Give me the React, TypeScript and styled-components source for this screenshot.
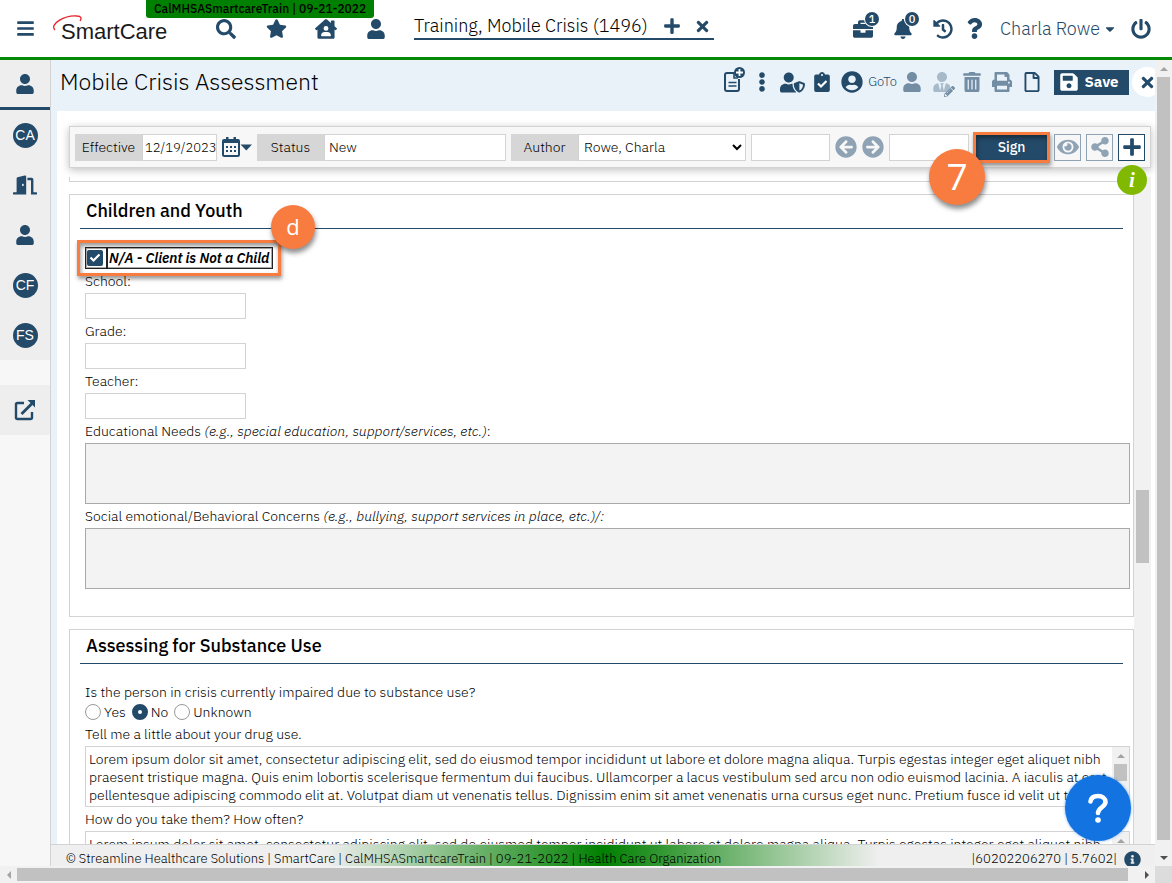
import React from 'react';
import styled, { createGlobalStyle, css } from 'styled-components';
import {
  FaArrowCircleLeft, FaArrowCircleRight, FaBars, FaBell, FaBriefcase, FaCaretDown, FaDoorOpen,
  FaEllipsisV, FaEye, FaHistory, FaHouseUser, FaInfoCircle, FaPlus, FaPowerOff, FaPrint,
  FaQuestion, FaRegFile, FaSave, FaSearch, FaShareAlt, FaStar, FaTimes,
  FaTrashAlt, FaUser, FaUserCircle, FaUserShield, FaUserTie, FaPencilAlt,
} from 'react-icons/fa';

const navy = '#244a69';
const faded = '#728da4';
const line = '#d3d3d3';
const orange = '#f87c40';

const GlobalStyle = createGlobalStyle`
  *, *::before, *::after { box-sizing: border-box; }
  body {
    margin: 0;
    color: #000;
    background: #fff;
    font: 350 14px/18px "IBM Plex Sans", Roboto, "Liberation Sans", sans-serif;
  }
  button, input, select, textarea { font: inherit; color: inherit; margin: 0; }
  button { padding: 0; border: 0; background: none; cursor: pointer; }
  svg { display: block; flex: none; }
`;

const Shell = styled.div`
  display: flex;
  flex-direction: column;
  height: 100vh;
  overflow: hidden;
`;

/* ---------- header ---------- */

const Header = styled.header`
  position: relative;
  display: flex;
  align-items: center;
  flex: none;
  height: 60px;
  padding: 0 21px 0 16px;
  border-bottom: 3px solid #068a06;
  color: ${navy};
`;

const Banner = styled.div`
  position: absolute;
  top: 0;
  left: 146px;
  height: 18px;
  padding: 0 8px;
  border-radius: 0 0 3px 3px;
  background: #008000;
  color: #000;
  font-size: 12px;
  font-weight: 500;
  white-space: nowrap;
`;

const PlainButton = styled.button`
  display: flex;
  align-items: center;
  justify-content: center;
  color: ${navy};
`;

const Logo = styled.a`
  position: relative;
  width: 140px;
  margin-left: 26px;
  color: #1a1a1a;
  font: 22px/26px "Liberation Sans", Arial, sans-serif;
  text-decoration: none;
  padding-top: 7px;

  svg { position: absolute; left: -10px; top: 3px; }
`;

const NavButton = styled(PlainButton)`
  width: 50px;
  height: 40px;
`;

const ClientTab = styled.div`
  display: flex;
  align-items: center;
  width: 300px;
  height: 26px;
  margin: 0 auto 3px 13px;
  border-bottom: 2px solid ${navy};
  font-size: 18px;

  span { flex: 1; color: #000; font-weight: 300; white-space: nowrap; }
  button { width: 30px; }
  button:last-child { margin-right: -3px; }
`;

const Tools = styled.div`
  display: flex;
  align-items: center;
`;

const ToolCell = styled(PlainButton)<{ $w: number }>`
  position: relative;
  width: ${(p) => p.$w}px;
  height: 40px;
`;

const Count = styled.span`
  position: absolute;
  top: 3px;
  left: 22px;
  width: 14px;
  height: 14px;
  border-radius: 50%;
  background: ${navy};
  box-shadow: 0 0 0 1px #fff;
  color: #fff;
  font-size: 11px;
  font-weight: 500;
  line-height: 14px;
  text-align: center;
`;

const UserMenu = styled(PlainButton)`
  gap: 3px;
  margin: 0 14px 0 15px;
  font-size: 18px;
  font-weight: 300;
  white-space: nowrap;
`;

/* ---------- body ---------- */

const Middle = styled.div`
  display: flex;
  flex: 1;
  min-height: 0;
`;

const Sidebar = styled.nav`
  flex: none;
  width: 51px;
  border-right: 1px solid ${line};
  background: #f7f7f7;
`;

const SideItem = styled(PlainButton)<{ $current?: boolean; $apart?: boolean }>`
  width: 50px;
  height: 50px;
  background: #eee;
  ${(p) => p.$current && css`border-bottom: 3px solid ${navy};`}
  ${(p) => p.$apart && css`margin-top: 25px;`}
`;

const Initials = styled.span`
  width: 25px;
  height: 25px;
  border-radius: 50%;
  background: ${navy};
  color: #fff;
  font: 14px/25px "Liberation Sans", Arial, sans-serif;
  text-align: center;
`;

const Main = styled.main`
  display: flex;
  flex-direction: column;
  flex: 1;
  min-width: 0;
  background: #eaf2f9;
`;

const TitleBar = styled.div`
  display: flex;
  align-items: center;
  flex: none;
  height: 51px;
  padding: 0 0 7px 9px;
  overflow: hidden;
  color: ${navy};
`;

const Title = styled.h1`
  flex: 1;
  margin: 0;
  padding-bottom: 2px;
  color: #000;
  font-size: 23px;
  font-weight: 350;
  line-height: 30px;
`;

const ActionButton = styled(PlainButton)<{ $dim?: boolean }>`
  position: relative;
  width: 30px;
  height: 30px;
  ${(p) => p.$dim && css`color: ${faded};`}
`;

const GoToButton = styled(PlainButton)`
  justify-content: flex-end;
  gap: 5px;
  width: 60px;
  font-size: 13px;
`;

const PencilMark = styled.span`
  position: absolute;
  right: 2px;
  bottom: 0;
`;

const SaveButton = styled(PlainButton)`
  gap: 5px;
  width: 75px;
  height: 25px;
  margin-left: 7px;
  padding-right: 5px;
  background: ${navy};
  color: #fff;
  font-size: 15px;
  font-weight: 700;
`;

const CloseButton = styled(PlainButton)`
  flex: none;
  width: 30px;
  height: 30px;
  margin: 0 -7px 0 3px;
  border-radius: 50%;
  background: #fff;
`;

const Sheet = styled.div`
  position: relative;
  display: flex;
  flex-direction: column;
  flex: 1;
  min-height: 0;
  margin-left: 6px;
  padding: 15px 4px 0 12px;
  background: #fff;
`;

const Toolbar = styled.div`
  display: flex;
  align-items: center;
  flex: none;
  gap: 5px;
  height: 42px;
  padding: 0 5px;
  border: 1px solid ${line};
  background: #f7f7f7;
  box-shadow: 0 2px 8px rgba(0, 0, 0, 0.25);
`;

const Field = styled.div<{ $grow?: boolean }>`
  display: flex;
  height: 27px;
  flex: ${(p) => (p.$grow ? '1' : 'none')};
  min-width: 0;

  label {
    flex: none;
    width: 67px;
    background: #d6d6d6;
    line-height: 27px;
    text-align: center;
  }
`;

const BarInput = styled.input<{ $w?: number }>`
  width: ${(p) => (p.$w ? `${p.$w}px` : '100%')};
  height: 27px;
  padding: 0 0 0 4px;
  border: 1px solid ${line};
  border-radius: 0;
  background: #fff;
`;

const DateInput = styled(BarInput)`
  padding-left: 2px;
  font-size: 13px;
`;

const AuthorSelect = styled.select`
  width: 168px;
  height: 27px;
  padding: 0 1px;
  border: 1px solid ${line};
  border-radius: 0;
  background: #fff;
`;

const DateButton = styled(PlainButton)`
  width: 30px;
`;

const RoundButton = styled(PlainButton)`
  width: 22px;
  color: #8fa3b5;
`;

const SignHolder = styled.div`
  position: relative;
  width: 75px;
  height: 27px;
`;

const SignButton = styled.button`
  width: 100%;
  height: 100%;
  background: ${navy};
  color: #fff;
  font-weight: 500;
`;

const Frame = styled.span<{ $x: number; $y: number }>`
  position: absolute;
  inset: ${(p) => -p.$y}px ${(p) => -p.$x}px;
  border: 3px solid ${orange};
  box-shadow: 1px 3px 4px rgba(0, 0, 0, 0.4), inset 1px 3px 4px rgba(0, 0, 0, 0.4);
  pointer-events: none;
`;

const Step = styled.span<{ $size: number; $left: number; $top: number; $font: number }>`
  position: absolute;
  z-index: 2;
  left: ${(p) => p.$left}px;
  top: ${(p) => p.$top}px;
  width: ${(p) => p.$size}px;
  height: ${(p) => p.$size}px;
  border-radius: 50%;
  background: ${orange};
  box-shadow: 1px 4px 5px rgba(0, 0, 0, 0.45);
  color: #fff;
  font: 500 ${(p) => p.$font}px/${(p) => p.$size - 2}px "Open Sans", "Noto Sans", sans-serif;
  text-align: center;
`;

const SquareButton = styled(PlainButton)<{ $on?: boolean }>`
  width: 27px;
  height: 27px;
  border: 1px solid ${(p) => (p.$on ? navy : '#8fa3b5')};
  color: ${(p) => (p.$on ? navy : '#8fa3b5')};
  background: ${(p) => (p.$on ? '#fff' : 'transparent')};
`;

const InfoDot = styled.button`
  position: absolute;
  z-index: 2;
  top: 54px;
  right: 8px;
  width: 30px;
  height: 30px;
  border-radius: 50%;
  background: #80b900;
  color: #fff;
  font: italic bold 21px/30px "Liberation Serif", serif;
`;

const Scroller = styled.div`
  display: flex;
  flex: 1;
  min-height: 0;
  margin-top: 9px;
`;

const FormColumn = styled.div`
  flex: 1;
  min-width: 0;
  overflow: hidden;
`;

const PreviousEnd = styled.div`
  height: 5px;
  margin-bottom: 12px;
  border: 1px solid ${line};
  border-top: 0;
`;

const Card = styled.section`
  margin-bottom: 12px;
  padding: 0 3px 27px 15px;
  border: 1px solid ${line};
`;

const CardTitle = styled.h2`
  height: 34px;
  margin: 0 7px 18px -5px;
  padding-left: 6px;
  border-bottom: 1px solid ${navy};
  font-size: 18px;
  font-weight: 500;
  line-height: 32px;
`;

const CheckRow = styled.div`
  position: relative;
  display: flex;
  width: 188px;
  height: 22px;
  border: 1px solid #222;
  box-shadow: inset 0 0 0 1px #aaa;

  label {
    flex: 1;
    border: 1px solid #222;
    border-width: 0 0 0 2px;
    padding-left: 1px;
    font-weight: 600;
    font-style: italic;
    line-height: 20px;
    white-space: nowrap;
  }
`;

const CheckBox = styled.span`
  position: relative;
  flex: none;
  width: 16px;
  height: 16px;
  margin: 2px 3px 0 1px;

  input {
    display: block;
    appearance: none;
    width: 16px;
    height: 16px;
    margin: 0;
    border-radius: 2px;
    background: ${navy};
  }
  svg { position: absolute; left: 2px; top: 3px; pointer-events: none; }
`;

const FieldLabel = styled.label`
  display: block;
  line-height: 24px;
`;

const ShortInput = styled.input`
  display: block;
  width: 161px;
  height: 26px;
  padding: 0 4px;
  border: 1px solid ${line};
`;

const DisabledArea = styled.textarea`
  display: block;
  width: 100%;
  height: 61px;
  border: 1px solid #a9a9a9;
  background: #f3f3f3;
  resize: none;
`;

const Choices = styled.fieldset`
  margin: 0;
  padding: 0;
  border: 0;

  legend { padding: 0; line-height: 20px; }
`;

const ChoiceRow = styled.div`
  display: flex;
  align-items: center;
  gap: 6px;
  height: 20px;

  label { display: flex; align-items: center; gap: 3px; }
  input {
    appearance: none;
    width: 16px;
    height: 16px;
    border: 1px solid #999;
    border-radius: 50%;
    background: #fff;
  }
  input:checked { border: 6px solid ${navy}; }
`;

const LongAnswer = styled.div`
  display: flex;
  height: 61px;
  border: 1px solid ${line};

  textarea {
    flex: 1;
    min-width: 0;
    padding: 3px;
    border: 0;
    resize: none;
    overflow: hidden;
    white-space: pre;
    line-height: 18px;
  }
`;

/* ---------- scroll bars ---------- */

const Track = styled.div<{ $across?: boolean }>`
  display: flex;
  flex: ${(p) => (p.$across ? '1' : 'none')};
  flex-direction: ${(p) => (p.$across ? 'row' : 'column')};
  ${(p) => (p.$across ? 'height: 17px;' : 'width: 17px;')}
  background: #f1f1f1;
`;

const Space = styled.i<{ $grow: number }>`
  flex: ${(p) => p.$grow} 1 0;
`;

const Thumb = styled(Space)`
  margin: 0 2px;
  background: #c1c1c1;
`;

const WideThumb = styled(Space)`
  margin: 2px 0;
  background: #c1c1c1;
`;

const ArrowBox = styled.span`
  display: flex;
  align-items: center;
  justify-content: center;
  flex: none;
  width: 17px;
  height: 17px;
`;

const arrows = {
  up: 'M0 6h8L4 2z',
  down: 'M0 2h8L4 6z',
  left: 'M6 0v8L2 4z',
  right: 'M2 0v8l4-4z',
};

function Arrow({ to, color = '#505050' }: { to: keyof typeof arrows; color?: string }) {
  return (
    <ArrowBox>
      <svg width="8" height="8" viewBox="0 0 8 8"><path d={arrows[to]} fill={color} /></svg>
    </ArrowBox>
  );
}

const BottomBar = styled.div`
  display: flex;
  flex: none;
  height: 17px;
`;

const Corner = styled.div`
  width: 17px;
  background: #dcdcdc;
`;

/* ---------- footer ---------- */

const Footer = styled.footer`
  display: flex;
  align-items: flex-start;
  justify-content: space-between;
  flex: none;
  height: 22px;
  padding: 6px 14px 0 15px;
  border-top: 1px solid ${line};
  background: linear-gradient(90deg, #efefef 25%, #008000 50%, #efefef 75%);
  font-size: 13px;
  line-height: 15px;
  white-space: nowrap;
`;

const Version = styled.span`
  display: flex;
  gap: 7px;
  height: 15px;
  svg { color: ${navy}; }
`;

const HelpButton = styled.button`
  position: absolute;
  z-index: 3;
  right: 24px;
  bottom: 3px;
  display: flex;
  align-items: center;
  justify-content: center;
  width: 66px;
  height: 66px;
  border-radius: 50%;
  background: #1373e0;
  box-shadow: 0 0 3px rgba(19, 115, 224, 0.6);
`;

/* ---------- icons with no match in the package ---------- */

const FilePlus = () => (
  <svg width="26" height="30" viewBox="-4 0 26 30" fill="none" stroke={navy} strokeWidth="2">
    <path d="M11 6H4Q2 6 2 8v14q0 2 2 2h10q2 0 2-2V12" />
    <path d="M11 6v5h4M5.500 15.500h8M5.500 19h8" strokeWidth="1.600" />
    <circle cx="16.500" cy="5.500" r="5.500" fill={navy} stroke="none" />
    <path d="M13 5.500h7M16.500 2v7" stroke="#fff" strokeWidth="1.800" />
  </svg>
);

const ClipboardTick = () => (
  <svg width="16" height="20" viewBox="0 0 16 20">
    <path fill={navy} d="M2 2.500h3A3 3 0 0 1 8 0a3 3 0 0 1 3 2.500h3a1.800 1.800 0 0 1 1.800 1.800v13.900A1.800 1.800 0 0 1 14 20H2a1.800 1.800 0 0 1-1.800-1.800V4.300A1.800 1.800 0 0 1 2 2.500z" />
    <circle cx="8" cy="3" r="1" fill="#fff" />
    <path d="M4 11.500l3 3 5.500-5.500" fill="none" stroke="#fff" strokeWidth="2.200" />
  </svg>
);

const OpenOut = () => (
  <svg width="22" height="22" viewBox="0 0 22 22" fill="none" stroke={navy} strokeWidth="2.400">
    <path d="M10 4H3.500Q2 4 2 5.500v13Q2 20 3.500 20h13q1.500 0 1.500-1.500V13" />
    <path d="M7.500 15L18 4.500" strokeWidth="2.800" />
    <path d="M13.500 1H21v7.500z" fill={navy} stroke="none" />
  </svg>
);

const CalendarDrop = () => (
  <svg width="30" height="20" viewBox="0 0 30 20" fill={navy}>
    <path d="M1 5h16v12.500q0 1.500-1.500 1.500h-13Q1 19 1 17.500z" fill="none" stroke={navy} strokeWidth="2" />
    <path d="M0 4q0-2 2-2h14q2 0 2 2v2H0zM4 0h2.500v4H4zM11.500 0H14v4h-2.500z" />
    <path d="M4 9h2v2H4zM8 9h2v2H8zM12 9h2v2h-2zM4 13h2v2H4zM8 13h2v2H8zM12 13h2v2h-2z" />
    <path d="M18.500 7.500h11.500l-5.700 6z" />
  </svg>
);

const lorem = [
  'Lorem ipsum dolor sit amet, consectetur adipiscing elit, sed do eiusmod tempor incididunt ut labore et dolore magna aliqua. Turpis egestas integer eget aliquet nibh',
  'praesent tristique magna. Quis enim lobortis scelerisque fermentum dui faucibus. Ullamcorper a lacus vestibulum sed arcu non odio euismod lacinia. A iaculis at erat',
  'pellentesque adipiscing commodo elit at. Volutpat diam ut venenatis tellus. Dignissim enim sit amet venenatis urna cursus eget nunc. Pretium fusce id velit ut tortor',
].join('\n');

function Answer({ id }: { id: string }) {
  return (
    <LongAnswer>
      <textarea id={id} defaultValue={lorem} />
      <Track aria-hidden="true">
        <Arrow to="up" color="#a3a3a3" />
        <Thumb $grow={17} />
        <Space $grow={8} />
        <Arrow to="down" />
      </Track>
    </LongAnswer>
  );
}

export default function App() {
  return (
    <Shell>
      <GlobalStyle />
      <Header>
        <Banner>CalMHSASmartcareTrain | 09-21-2022</Banner>
        <PlainButton aria-label="Menu"><FaBars size={19} /></PlainButton>
        <Logo href="#home">
          <svg width="34" height="18" viewBox="0 0 34 18" fill="none" stroke="#e8202a">
            <path d="M4 15C-2 9 14 0 26 1c4 0 5 2 3 5" strokeWidth="1.300" />
          </svg>
          SmartCare
        </Logo>
        <NavButton aria-label="Search"><FaSearch size={20} /></NavButton>
        <NavButton aria-label="Favorites"><FaStar size={21} /></NavButton>
        <NavButton aria-label="Home"><FaHouseUser size={22} /></NavButton>
        <NavButton aria-label="Client"><FaUser size={20} /></NavButton>
        <ClientTab>
          <span>Training, Mobile Crisis (1496)</span>
          <PlainButton aria-label="Add client"><FaPlus size={18} /></PlainButton>
          <PlainButton aria-label="Close client"><FaTimes size={17} /></PlainButton>
        </ClientTab>
        <Tools>
          <ToolCell $w={40} aria-label="Work items"><FaBriefcase size={20} /><Count>1</Count></ToolCell>
          <ToolCell $w={40} aria-label="Alerts"><FaBell size={20} /><Count>0</Count></ToolCell>
          <ToolCell $w={40} aria-label="History"><FaHistory size={20} /></ToolCell>
          <ToolCell $w={22} aria-label="Help"><FaQuestion size={21} /></ToolCell>
          <UserMenu>Charla Rowe <FaCaretDown size={14} /></UserMenu>
          <PlainButton aria-label="Log out"><FaPowerOff size={20} /></PlainButton>
        </Tools>
      </Header>

      <Middle>
        <Sidebar>
          <SideItem $current aria-label="Client"><FaUser size={20} /></SideItem>
          <SideItem><Initials>CA</Initials></SideItem>
          <SideItem aria-label="Admissions"><FaDoorOpen size={24} /></SideItem>
          <SideItem aria-label="Staff"><FaUser size={20} /></SideItem>
          <SideItem><Initials>CF</Initials></SideItem>
          <SideItem><Initials>FS</Initials></SideItem>
          <SideItem $apart aria-label="Open in new window"><OpenOut /></SideItem>
        </Sidebar>

        <Main>
          <TitleBar>
            <Title>Mobile Crisis Assessment</Title>
            <ActionButton aria-label="New document"><FilePlus /></ActionButton>
            <ActionButton aria-label="More"><FaEllipsisV size={20} /></ActionButton>
            <ActionButton aria-label="Permissions"><FaUserShield size={25} /></ActionButton>
            <ActionButton aria-label="Checklist"><ClipboardTick /></ActionButton>
            <GoToButton><FaUserCircle size={22} />GoTo</GoToButton>
            <ActionButton $dim aria-label="Person"><FaUser size={20} /></ActionButton>
            <ActionButton $dim aria-label="Edit signer">
              <FaUserTie size={20} opacity={0.55} />
              <PencilMark><FaPencilAlt size={11} /></PencilMark>
            </ActionButton>
            <ActionButton $dim aria-label="Delete"><FaTrashAlt size={20} /></ActionButton>
            <ActionButton $dim aria-label="Print"><FaPrint size={20} /></ActionButton>
            <ActionButton aria-label="New"><FaRegFile size={20} /></ActionButton>
            <SaveButton><FaSave size={20} />Save</SaveButton>
            <CloseButton aria-label="Close"><FaTimes size={17} /></CloseButton>
          </TitleBar>

          <Sheet>
            <Toolbar>
              <Field>
                <label htmlFor="effective">Effective</label>
                <DateInput id="effective" $w={75} defaultValue="12/19/2023" />
              </Field>
              <DateButton aria-label="Pick a date"><CalendarDrop /></DateButton>
              <Field $grow>
                <label htmlFor="status">Status</label>
                <BarInput id="status" defaultValue="New" />
              </Field>
              <Field>
                <label htmlFor="author">Author</label>
                <AuthorSelect id="author"><option>Rowe, Charla</option></AuthorSelect>
              </Field>
              <BarInput $w={79} aria-label="Version" />
              <RoundButton aria-label="Previous"><FaArrowCircleLeft size={22} /></RoundButton>
              <RoundButton aria-label="Next"><FaArrowCircleRight size={22} /></RoundButton>
              <BarInput $w={80} aria-label="Signed version" />
              <SignHolder>
                <SignButton>Sign</SignButton>
                <Frame $x={1} $y={2} />
                <Step $size={56} $left={-45} $top={15} $font={37}>7</Step>
              </SignHolder>
              <SquareButton aria-label="View"><FaEye size={22} /></SquareButton>
              <SquareButton aria-label="Share"><FaShareAlt size={20} /></SquareButton>
              <SquareButton $on aria-label="Add"><FaPlus size={20} /></SquareButton>
            </Toolbar>
            <InfoDot aria-label="Information">i</InfoDot>

            <Scroller>
              <FormColumn>
                <PreviousEnd />
                <Card>
                  <CardTitle>Children and Youth</CardTitle>
                  <CheckRow>
                    <CheckBox>
                      <input type="checkbox" id="notchild" defaultChecked />
                      <svg width="12" height="10" viewBox="0 0 12 10">
                        <path d="M1.500 4.500l3 3 6-6" fill="none" stroke="#fff" strokeWidth="2.200" />
                      </svg>
                    </CheckBox>
                    <label htmlFor="notchild">N/A - Client is Not a Child</label>
                    <Frame $x={9} $y={8} />
                    <Step $size={44} $left={185} $top={-43} $font={22}>d</Step>
                  </CheckRow>
                  <FieldLabel htmlFor="school">School:</FieldLabel>
                  <ShortInput id="school" />
                  <FieldLabel htmlFor="grade">Grade:</FieldLabel>
                  <ShortInput id="grade" />
                  <FieldLabel htmlFor="teacher">Teacher:</FieldLabel>
                  <ShortInput id="teacher" />
                  <FieldLabel htmlFor="needs">
                    Educational Needs <em>(e.g., special education, support/services, etc.)</em>:
                  </FieldLabel>
                  <DisabledArea id="needs" disabled />
                  <FieldLabel htmlFor="concerns">
                    Social emotional/Behavioral Concerns <em>(e.g., bullying, support services in place, etc.)/:</em>
                  </FieldLabel>
                  <DisabledArea id="concerns" disabled />
                </Card>

                <Card>
                  <CardTitle>Assessing for Substance Use</CardTitle>
                  <Choices>
                    <legend>Is the person in crisis currently impaired due to substance use?</legend>
                    <ChoiceRow>
                      <label><input type="radio" name="impaired" />Yes</label>
                      <label><input type="radio" name="impaired" defaultChecked />No</label>
                      <label><input type="radio" name="impaired" />Unknown</label>
                    </ChoiceRow>
                  </Choices>
                  <FieldLabel htmlFor="druguse">Tell me a little about your drug use.</FieldLabel>
                  <Answer id="druguse" />
                  <FieldLabel htmlFor="howoften">How do you take them? How often?</FieldLabel>
                  <Answer id="howoften" />
                </Card>
              </FormColumn>
              <Track aria-hidden="true">
                <Space $grow={313} />
                <Thumb $grow={73} />
                <Space $grow={281} />
              </Track>
            </Scroller>
            <HelpButton aria-label="Help">
              <svg width="24" height="34" viewBox="0 0 24 34" fill="none" stroke="#fff">
                <path d="M4.500 10.500C5 7 8 5 12 5c4.500 0 7.500 2.500 7.500 6 0 5-7.500 5.500-7.500 11" strokeWidth="4.600" strokeLinecap="round" />
                <circle cx="12" cy="29" r="2.800" fill="#fff" stroke="none" />
              </svg>
            </HelpButton>
          </Sheet>

          <Footer>
            <span>© Streamline Healthcare Solutions | SmartCare | CalMHSASmartcareTrain | 09-21-2022 | Health Care Organization</span>
            <Version>|60202206270 | 5.7602| <FaInfoCircle size={17} /></Version>
          </Footer>
        </Main>

        <Track aria-hidden="true">
          <Arrow to="up" color="#a3a3a3" />
          <Thumb $grow={763} />
          <Space $grow={9} />
          <Arrow to="down" />
        </Track>
      </Middle>

      <BottomBar aria-hidden="true">
        <Track $across>
          <Arrow to="left" color="#a3a3a3" />
          <WideThumb $grow={1111} />
          <Space $grow={10} />
          <Arrow to="right" />
        </Track>
        <Corner />
      </BottomBar>
    </Shell>
  );
}
